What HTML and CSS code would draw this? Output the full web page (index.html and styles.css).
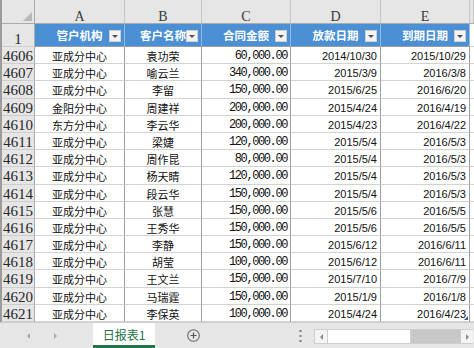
FILE: index.html
```html
<!DOCTYPE html>
<html lang="zh-CN">
<head>
<meta charset="utf-8">
<title>日报表1</title>
<link rel="stylesheet" href="styles.css">
</head>
<body>
<div class="sheet">
  <div class="row head">
    <div class="corner"><span class="sel"></span></div>
    <div>A</div><div>B</div><div>C</div><div>D</div><div>E</div><div></div>
  </div>
  <div class="row title">
    <div class="rh">1</div>
    <div class="th">管户机构<i class="filter"></i></div>
    <div class="th">客户名称<i class="filter"></i></div>
    <div class="th">合同金额<i class="filter"></i></div>
    <div class="th">放款日期<i class="filter"></i></div>
    <div class="th">到期日期<i class="filter"></i></div>
    <div class="blank"></div>
  </div>
  <div class="row data"><div class="rh">4606</div><div class="c">亚成分中心</div><div class="c">袁功荣</div><div class="c num">60,000.00</div><div class="c date">2014/10/30</div><div class="c date">2015/10/29</div><div class="c f"></div></div>
  <div class="row data"><div class="rh">4607</div><div class="c">亚成分中心</div><div class="c">喻云兰</div><div class="c num">340,000.00</div><div class="c date">2015/3/9</div><div class="c date">2016/3/8</div><div class="c f"></div></div>
  <div class="row data"><div class="rh">4608</div><div class="c">亚成分中心</div><div class="c">李留</div><div class="c num">150,000.00</div><div class="c date">2015/6/25</div><div class="c date">2016/6/20</div><div class="c f"></div></div>
  <div class="row data"><div class="rh">4609</div><div class="c">金阳分中心</div><div class="c">周建祥</div><div class="c num">200,000.00</div><div class="c date">2015/4/24</div><div class="c date">2016/4/19</div><div class="c f"></div></div>
  <div class="row data"><div class="rh">4610</div><div class="c">东方分中心</div><div class="c">李云华</div><div class="c num">200,000.00</div><div class="c date">2015/4/23</div><div class="c date">2016/4/22</div><div class="c f"></div></div>
  <div class="row data"><div class="rh">4611</div><div class="c">亚成分中心</div><div class="c">梁婕</div><div class="c num">120,000.00</div><div class="c date">2015/5/4</div><div class="c date">2016/5/3</div><div class="c f"></div></div>
  <div class="row data"><div class="rh">4612</div><div class="c">亚成分中心</div><div class="c">周作昆</div><div class="c num">80,000.00</div><div class="c date">2015/5/4</div><div class="c date">2016/5/3</div><div class="c f"></div></div>
  <div class="row data"><div class="rh">4613</div><div class="c">亚成分中心</div><div class="c">杨天睛</div><div class="c num">120,000.00</div><div class="c date">2015/5/4</div><div class="c date">2016/5/3</div><div class="c f"></div></div>
  <div class="row data"><div class="rh">4614</div><div class="c">亚成分中心</div><div class="c">段云华</div><div class="c num">150,000.00</div><div class="c date">2015/5/4</div><div class="c date">2016/5/3</div><div class="c f"></div></div>
  <div class="row data"><div class="rh">4615</div><div class="c">亚成分中心</div><div class="c">张慧</div><div class="c num">150,000.00</div><div class="c date">2015/5/6</div><div class="c date">2016/5/5</div><div class="c f"></div></div>
  <div class="row data"><div class="rh">4616</div><div class="c">亚成分中心</div><div class="c">王秀华</div><div class="c num">150,000.00</div><div class="c date">2015/5/6</div><div class="c date">2016/5/5</div><div class="c f"></div></div>
  <div class="row data"><div class="rh">4617</div><div class="c">亚成分中心</div><div class="c">李静</div><div class="c num">150,000.00</div><div class="c date">2015/6/12</div><div class="c date">2016/6/11</div><div class="c f"></div></div>
  <div class="row data"><div class="rh">4618</div><div class="c">亚成分中心</div><div class="c">胡莹</div><div class="c num">100,000.00</div><div class="c date">2015/6/12</div><div class="c date">2016/6/11</div><div class="c f"></div></div>
  <div class="row data"><div class="rh">4619</div><div class="c">亚成分中心</div><div class="c">王文兰</div><div class="c num">150,000.00</div><div class="c date">2015/7/10</div><div class="c date">2016/7/9</div><div class="c f"></div></div>
  <div class="row data"><div class="rh">4620</div><div class="c">亚成分中心</div><div class="c">马瑞霆</div><div class="c num">150,000.00</div><div class="c date">2015/1/9</div><div class="c date">2016/1/8</div><div class="c f"></div></div>
  <div class="row data"><div class="rh">4621</div><div class="c">亚成分中心</div><div class="c">李保英</div><div class="c num">100,000.00</div><div class="c date">2015/4/24</div><div class="c date last">2016/4/23</div><div class="c f"></div></div>
</div>
<div class="bar">
  <div class="nav"><span class="tri-l"></span><span class="tri-r"></span></div>
  <div class="tab">日报表1</div>
  <svg class="plus" width="13" height="13" viewBox="0 0 13 13"><circle cx="6.5" cy="6.5" r="5.8" fill="none" stroke="#6a6a6a" stroke-width="1.1"/><path d="M6.5 3.5v6M3.5 6.5h6" stroke="#555" stroke-width="1.2"/></svg>
  <svg class="dots" width="3" height="12" viewBox="0 0 3 12"><rect x="0.5" y="0" width="2" height="2" fill="#7a7a7a"/><rect x="0.5" y="5" width="2" height="2" fill="#7a7a7a"/><rect x="0.5" y="10" width="2" height="2" fill="#7a7a7a"/></svg>
  <div class="scroll">
    <div class="sarrow"><span class="tri-l small"></span></div>
    <div class="strack"></div>
    <div class="sthumb"></div>
    <div class="sarrow"><span class="tri-r small"></span></div>
  </div>
</div>
</body>
</html>
```
FILE: styles.css
```css
html, body {
  margin: 0;
  padding: 0;
}
body {
  width: 474px;
  height: 348px;
  overflow: hidden;
  background: #ffffff;
  font-family: "Noto Sans CJK SC", sans-serif;
}
.sheet {
  height: 322px;
  overflow: hidden;
  border-left: 2px solid #9c9c9c;
  box-sizing: border-box;
}
.row {
  display: grid;
  grid-template-columns: 33px 90px 77px 89px 90px 89px 1fr;
}
.row > div {
  box-sizing: border-box;
  border-right: 1px solid #9d9d9d;
  border-bottom: 1px solid #d2d2d2;
  min-width: 0;
  overflow: hidden;
  white-space: nowrap;
}

/* column letters */
.head { height: 24px; }
.head > div {
  background: #e6e6e6;
  border-right-color: #c6c6c6;
  border-bottom-color: #ababab;
  text-align: center;
  padding-top: 10px;
  font: 14px/14px "Liberation Serif", serif;
  color: #3a3a3a;
}
.head > .corner {
  display: flex;
  justify-content: flex-end;
  align-items: flex-end;
  padding: 0 2px 2px 0;
  border-right-color: #ababab;
}
.sel {
  width: 0;
  height: 0;
  border-left: 9px solid transparent;
  border-bottom: 9px solid #b7b7b7;
}

/* row numbers */
.rh {
  background: #e6e6e6;
  text-align: center;
  font: 15px/15px "Liberation Serif", serif;
  color: #262626;
}
.row > .rh {
  border-right-color: #ababab;
  border-bottom-color: #cdcdcd;
}

/* table header row */
.title { height: 23px; }
.title > .rh { padding-top: 8px; }
.title > .th {
  position: relative;
  background: #4b8fd5;
  color: #ffffff;
  font-size: 11.5px;
  font-weight: 700;
  line-height: 22px;
  text-align: center;
  border-right-color: #93b9e6;
  border-bottom-color: #9d9d9d;
}
.title > .blank { border-right: 0; }
.filter {
  position: absolute;
  top: 6px;
  right: 3px;
  width: 12px;
  height: 12px;
  box-sizing: border-box;
  background: #f3f3f3;
  border: 1px solid #d0d0d0;
  display: flex;
  align-items: center;
  justify-content: center;
}
.filter::after {
  content: "";
  width: 0;
  height: 0;
  margin-top: 1px;
  border-left: 3px solid transparent;
  border-right: 3px solid transparent;
  border-top: 3px solid #505050;
}

/* data rows */
.data { height: 17.1875px; }
.data > .rh { padding-top: 2px; }
.c {
  font-size: 11px;
  line-height: 15px;
  padding-top: 2px;
  text-align: center;
  color: #111111;
}
.c.num {
  text-align: right;
  padding-right: 3px;
  padding-top: 2px;
  font-size: 12px;
  font-family: "Liberation Mono", monospace;
  letter-spacing: -1.4px;
}
.c.date {
  text-align: right;
  padding-right: 3px;
  font-family: "Liberation Sans", sans-serif;
}
.row > .c.f { border-right: 0; }
.c.last { position: relative; }
.c.last::after {
  content: "";
  position: absolute;
  right: 1px;
  bottom: 1px;
  width: 0;
  height: 0;
  border-left: 4px solid transparent;
  border-bottom: 4px solid #3f5a86;
}

/* sheet tab bar */
.bar {
  height: 26px;
  box-sizing: border-box;
  background: #e6e6e6;
  border-top: 1px solid #cfcfcf;
  display: flex;
  align-items: stretch;
}
.nav {
  width: 93px;
  box-sizing: border-box;
  display: flex;
  align-items: center;
  padding-left: 27px;
  gap: 24px;
}
.tri-l, .tri-r {
  width: 0;
  height: 0;
  border-top: 3px solid transparent;
  border-bottom: 3px solid transparent;
}
.tri-l { border-right: 3px solid #a8a8a8; }
.tri-r { border-left: 3px solid #a8a8a8; }
.tri-l.small { border-right-color: #8a8a8a; }
.tri-r.small { border-left-color: #8a8a8a; }
.tab {
  width: 62px;
  box-sizing: border-box;
  background: #ffffff;
  border-bottom: 3px solid #217346;
  color: #217346;
  font-size: 12px;
  display: flex;
  align-items: center;
  justify-content: center;
}
.plus {
  align-self: center;
  margin-left: 32px;
}
.dots {
  align-self: center;
  margin-left: 99px;
}
.scroll {
  align-self: center;
  margin-left: 12px;
  margin-top: 2px;
  width: 159px;
  height: 15px;
  box-sizing: border-box;
  display: flex;
  background: #f4f4f4;
  border: 1px solid #cfcfcf;
  border-right: 0;
}
.sarrow {
  width: 12px;
  display: flex;
  align-items: center;
  justify-content: center;
}
.strack {
  width: 84px;
  background: #ffffff;
  border-left: 1px solid #cfcfcf;
  border-right: 1px solid #cfcfcf;
  box-sizing: border-box;
}
.sthumb {
  width: 50px;
  background: #c8c8c8;
}
```
